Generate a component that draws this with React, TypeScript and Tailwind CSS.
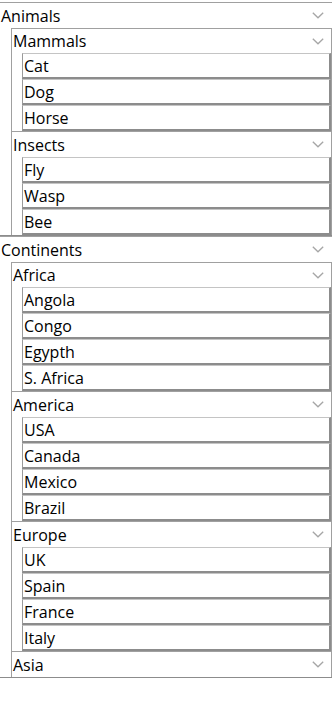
import React from 'react';

type Group = { title: string; items: string[] };
type Section = { title: string; groups: Group[] };

const DATA: Section[] = [
  {
    title: 'Animals',
    groups: [
      { title: 'Mammals', items: ['Cat', 'Dog', 'Horse'] },
      { title: 'Insects', items: ['Fly', 'Wasp', 'Bee'] },
    ],
  },
  {
    title: 'Continents',
    groups: [
      { title: 'Africa', items: ['Angola', 'Congo', 'Egypth', 'S. Africa'] },
      { title: 'America', items: ['USA', 'Canada', 'Mexico', 'Brazil'] },
      { title: 'Europe', items: ['UK', 'Spain', 'France', 'Italy'] },
      { title: 'Asia', items: [] },
    ],
  },
];

function Chevron() {
  return (
    <svg width="12" height="7" viewBox="0 0 12 7" className="shrink-0">
      <polyline points="0.8,0.8 6,5.8 11.2,0.8" fill="none" stroke="#a6a6a6" strokeWidth="1.3" />
    </svg>
  );
}

function GroupBox({ group, first }: { group: Group; first: boolean }) {
  return (
    <div className="border-l border-r border-[#a0a0a0]">
      {/* 二级标题 */}
      <div
        className={`flex items-center justify-between border-t border-[#a0a0a0] pl-[1px] pr-[7px] ${
          first ? 'h-[25px]' : 'h-[26px]'
        }`}
      >
        <span>{group.title}</span>
        <Chevron />
      </div>
      {group.items.length > 0 && (
        <div className="pl-[10px]">
          {group.items.map((item) => (
            <div
              key={item}
              className="h-[26px] flex items-center pl-[1px] border-l border-t border-[#9a9a9a] border-t-[#c4c4c4] border-b-2 border-r-2 border-b-[#8c8c8c] border-r-[#8c8c8c]"
            >
              {item}
            </div>
          ))}
        </div>
      )}
    </div>
  );
}

export default function App() {
  return (
    <div
      className="w-[332px] h-[710px] bg-white pt-[2px] text-[16px] leading-none text-black"
      style={{ fontFamily: '"Open Sans", "Noto Sans", sans-serif' }}
    >
      {DATA.map((section) => (
        <div key={section.title} className="border-b border-[#8c8c8c]">
          {/* 一级标题 */}
          <div className="h-[26px] flex items-center justify-between border-t border-[#a0a0a0] pl-[1px] pr-[8px]">
            <span>{section.title}</span>
            <Chevron />
          </div>
          <div className="pl-[11px]">
            {section.groups.map((g, i) => (
              <GroupBox key={g.title} group={g} first={i === 0} />
            ))}
          </div>
        </div>
      ))}
    </div>
  );
}
